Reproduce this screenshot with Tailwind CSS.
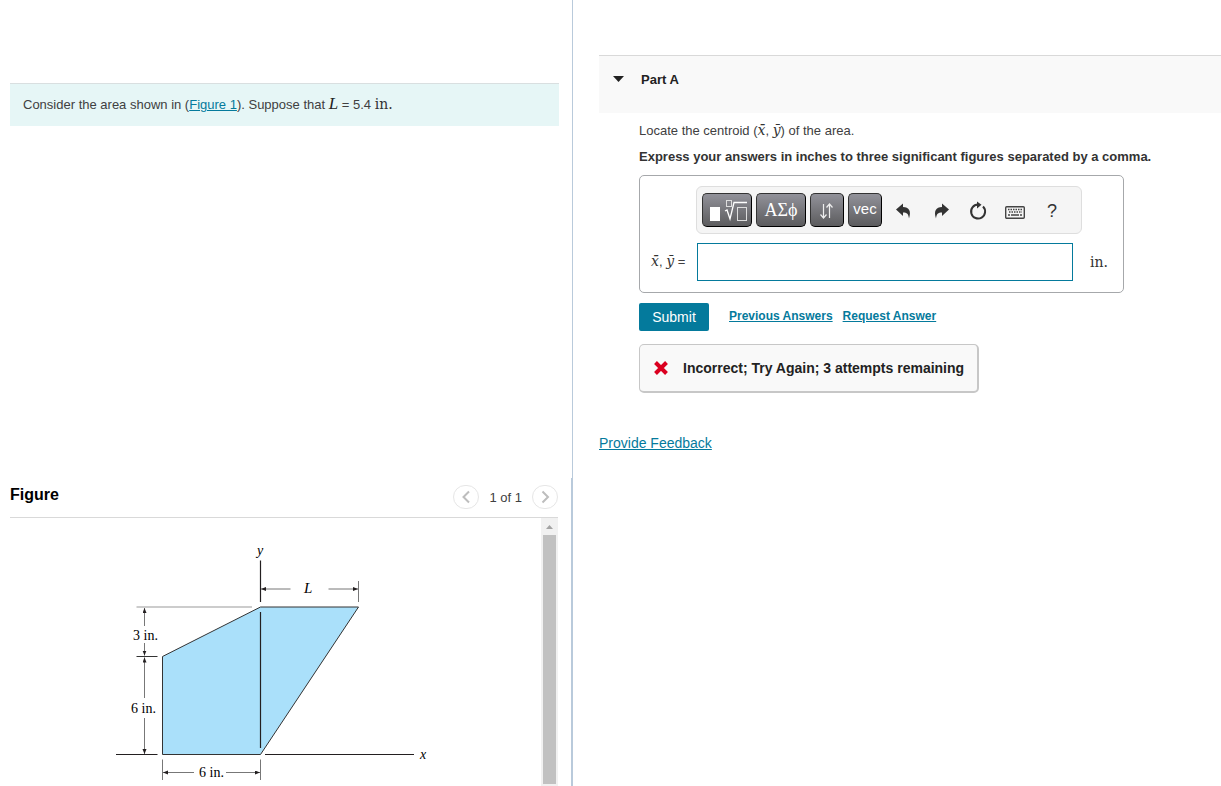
<!DOCTYPE html>
<html lang="en">
<head>
  <meta charset="UTF-8" />
  <title>Centroid of an Area</title>
  <meta name="viewport" content="width=device-width, initial-scale=1.0" />
  <script src="https://cdn.jsdelivr.net/npm/@tailwindcss/browser@4"></script>
</head>
<body class="bg-white text-[#404041] font-['Liberation_Sans',Arial,sans-serif] text-[13px] leading-5">
  <div class="grid grid-cols-[573fr_648fr] h-screen overflow-hidden">

    <!-- problem statement and figure -->
    <section class="flex flex-col min-h-0">
      <div class="flex-1 border-r border-[#b9cadb] pt-[83px] pl-2.5 pr-[13px]">
        <p class="bg-[#e6f6f6] border-t border-[#d9dfe0] px-[13px] py-[11px]">
          Consider the area shown in (<a href="#figure" class="text-[#047a9c] underline">Figure 1</a>). Suppose that
          <i class="font-['Liberation_Serif',serif] text-[17px] leading-4 text-[#222]">L</i> = 5.4 <span class="font-['DejaVu_Serif',serif] text-sm leading-4 text-[#333]">in.</span>
        </p>
      </div>

      <div id="figure" class="h-[308px] shrink-0 flex flex-col border-r-2 border-[#b9cadb] pl-2.5 pr-[13px]">
        <header class="h-10 flex items-start justify-between border-b border-[#d9d9d9]">
          <h2 class="text-base font-bold text-black leading-8 pt-px">Figure</h2>
          <div class="flex items-center gap-2.5 pt-[7px]">
            <button aria-label="Previous figure" class="w-[26px] h-6 rounded-full border border-[#e6e6e6] flex items-center justify-center">
              <svg width="10" height="14" viewBox="0 0 10 14" fill="none" stroke="#bdbdbd" stroke-width="2"><path d="M8 1.500 L2.500 7 L8 12.500" /></svg>
            </button>
            <span class="text-[13px] pt-0.5">1 of 1</span>
            <button aria-label="Next figure" class="w-[26px] h-6 rounded-full border border-[#e6e6e6] flex items-center justify-center">
              <svg width="10" height="14" viewBox="0 0 10 14" fill="none" stroke="#bdbdbd" stroke-width="2"><path d="M2.500 1.500 L8 7 L2.500 12.500" /></svg>
            </button>
          </div>
        </header>

        <div class="flex flex-1 min-h-0">
          <div class="flex-1 min-w-0 overflow-hidden">
            <svg width="531" height="268" viewBox="10 518 531 268" role="img" aria-label="Shaded area in the x-y plane" class="max-w-none">
              <defs>
                <marker id="arrow" markerUnits="userSpaceOnUse" markerWidth="6" markerHeight="5" refX="5" refY="2" orient="auto-start-reverse">
                  <path d="M0 0 L5 2 L0 4 Z" fill="#231f20" />
                </marker>
              </defs>
              <path d="M162.500 656.500 L260.500 607 H358.500 L260.500 754.500 H162.500 Z" fill="#aae0fa" stroke="#333" stroke-width="1" />
              <!-- axes -->
              <g stroke="#231f20" stroke-width="1.200">
                <path d="M260.500 560.500 V602 M260.500 612 V748" />
                <path d="M116 754.500 H157.500 M265 754.500 H414" />
              </g>
              <!-- extension lines -->
              <g stroke="#777" stroke-width="1">
                <path d="M136.500 607 H252" stroke="#999" />
                <path d="M136.500 656.500 H157.500" stroke="#333" />
                <path d="M358.500 581 V602" />
                <path d="M162.500 759.500 V780 M260.500 759.500 V780" />
              </g>
              <!-- dimension lines -->
              <g stroke="#777" stroke-width="1">
                <path d="M144.500 626 V608" marker-end="url(#arrow)" />
                <path d="M144.500 643 V655.500" marker-end="url(#arrow)" />
                <path d="M144.500 698 V657.500" marker-end="url(#arrow)" />
                <path d="M144.500 718 V754" marker-end="url(#arrow)" />
                <path d="M290.500 589 H261" marker-end="url(#arrow)" />
                <path d="M328.500 589 H358" marker-end="url(#arrow)" />
                <path d="M194 772.500 H163" marker-end="url(#arrow)" />
                <path d="M226 772.500 H260" marker-end="url(#arrow)" />
              </g>
              <g class="font-['Liberation_Serif',serif] text-sm" fill="#000">
                <text x="133" y="640">3 in.</text>
                <text x="131" y="713">6 in.</text>
                <text x="199" y="777">6 in.</text>
                <text x="304" y="593" font-style="italic" class="text-[15px]">L</text>
                <text x="257" y="555" font-style="italic">y</text>
                <text x="420" y="759" font-style="italic">x</text>
              </g>
            </svg>
          </div>
          <!-- scrollbar -->
          <div class="w-[17px] bg-[#f1f1f1] flex flex-col items-center pb-0.5">
            <svg class="h-[17px] w-[17px] shrink-0" viewBox="0 0 17 17"><path d="M5 11 L8.500 7 L12 11 Z" fill="#a3a3a3" /></svg>
            <div class="w-[13px] flex-1 bg-[#c1c1c1]"></div>
          </div>
        </div>
      </div>
    </section>

    <!-- answer side -->
    <main class="pt-[55px] pl-[26px]">
      <header class="h-[58px] bg-[#f9f9f9] border-t border-[#d9d9d9] flex items-start gap-[17px] pl-3.5 pt-3.5">
        <svg class="mt-[5px]" width="11" height="8" viewBox="0 0 11 8"><path d="M0 1 H11 L5.500 7 Z" fill="#222" /></svg>
        <h1 class="font-bold text-[#222]">Part A</h1>
      </header>

      <div class="pl-10 pt-2">
        <p>Locate the centroid (<i class="font-['DejaVu_Serif',serif] text-sm leading-4 text-[#333]">x̄</i>, <i class="font-['DejaVu_Serif',serif] text-sm leading-4 text-[#333]">ȳ</i>) of the area.</p>
        <p class="mt-1.5 font-bold text-[#333]">Express your answers in inches to three significant figures separated by a comma.</p>

        <form>
          <div class="mt-2 w-[485px] h-[118px] rounded-[5px] border border-[#a6a8ab] pt-2.5">
            <div class="ml-14 w-[386px] h-12 rounded-md border border-[#dedede] bg-[#f5f5f5] flex items-center pl-[5px] text-white">
              <button type="button" aria-label="Templates" class="w-[50px] h-[34px] mr-1 rounded-[5px] border border-[#333] border-r-black border-b-black bg-linear-to-b from-[#92929a] to-[#5c5c5e]">
                <svg width="48" height="32" viewBox="0 0 48 32" fill="none">
                  <rect x="7" y="13" width="10" height="14" fill="#fff" />
                  <rect x="23.500" y="6.500" width="5" height="6" stroke="#ddd" />
                  <path d="M22 17 L24 16 L27 25 L31 8.500 H44" stroke="#fff" stroke-width="1.300" />
                  <rect x="34.500" y="13.500" width="9" height="13" stroke="#ddd" />
                </svg>
              </button>
              <button type="button" class="w-[50px] h-[34px] mr-1 rounded-[5px] border border-[#333] border-r-black border-b-black bg-linear-to-b from-[#92929a] to-[#5c5c5e] font-['Liberation_Serif',serif] text-lg leading-8">ΑΣϕ</button>
              <button type="button" aria-label="Arrows" class="w-[34px] h-[34px] mr-1 rounded-[5px] border border-[#333] border-r-black border-b-black bg-linear-to-b from-[#92929a] to-[#5c5c5e]">
                <svg width="32" height="32" viewBox="0 0 32 32" fill="none" stroke="#eee" stroke-width="1.200">
                  <path d="M12.500 10 V24 M9.500 20.500 L12.500 24 L15.500 20.500 M18.500 24 V10 M15.500 13.500 L18.500 10 L21.500 13.500" />
                </svg>
              </button>
              <button type="button" class="w-[34px] h-[34px] pb-0.5 rounded-[5px] border border-[#333] border-r-black border-b-black bg-linear-to-b from-[#92929a] to-[#5c5c5e] text-[15px]">vec</button>
              <div class="flex items-center gap-4 ml-2.5 pt-0.5 text-[#333]">
                <button type="button" aria-label="Undo">
                  <svg width="22" height="22" viewBox="0 0 22 22"><path d="M4 9.500 L11 3.500 V7 C17 7 19.500 11 17 18.500 C16.500 14 15 12.500 11 12.500 V16 Z" fill="#333" /></svg>
                </button>
                <button type="button" aria-label="Redo">
                  <svg width="22" height="22" viewBox="0 0 22 22"><path d="M19 9.500 L12 3.500 V7 C6 7 3.500 11 6 18.500 C6.500 14 8 12.500 12 12.500 V16 Z" fill="#333" /></svg>
                </button>
                <button type="button" aria-label="Reset">
                  <svg width="20" height="22" viewBox="0 0 20 22" fill="none"><path d="M10 4.500 A7 7 0 1 0 15 6.500" stroke="#333" stroke-width="2" /><path d="M9 1.500 L13.500 4.800 L9 8.500 Z" fill="#333" /></svg>
                </button>
                <button type="button" aria-label="Keyboard shortcuts">
                  <svg width="22" height="22" viewBox="0 0 22 22" fill="none" stroke="#444"><rect x="1.700" y="6.700" width="18.600" height="11.600" rx="1" stroke-width="1.400" /><path d="M4 9.500 H18 M5 12 H18" stroke-width="1.500" stroke-dasharray="1.500 1" /><path d="M4 15 H6 M7 15 H15 M16 15 H18" stroke-width="1.500" /></svg>
                </button>
                <button type="button" aria-label="Help" class="w-5 text-lg leading-5">?</button>
              </div>
            </div>
            <div class="mt-[9px] flex items-center pl-[11px]">
              <label for="answer" class="w-[46px] whitespace-nowrap"><i class="font-['DejaVu_Serif',serif] text-sm leading-4 text-[#333]">x̄</i>, <i class="font-['DejaVu_Serif',serif] text-sm leading-4 text-[#333]">ȳ</i> =</label>
              <input id="answer" type="text" class="w-[376px] h-[38px] border border-[#047a9c] px-2 outline-none" />
              <span class="ml-[17px] font-['DejaVu_Serif',serif] text-sm leading-5 text-[#333]">in.</span>
            </div>
          </div>

          <div class="mt-2.5 flex items-start">
            <button type="submit" class="w-[70px] h-7 rounded-xs bg-[#047a9c] text-white text-sm">Submit</button>
            <a href="#previous" class="ml-5 mt-[3px] text-xs leading-5 font-bold text-[#047a9c] underline">Previous Answers</a>
            <a href="#request" class="ml-2.5 mt-[3px] text-xs leading-5 font-bold text-[#047a9c] underline">Request Answer</a>
          </div>
        </form>

        <div class="mt-[13px] w-[340px] h-[49px] rounded-[5px] border border-[#c7c7c7] border-r-2 border-b-2 bg-[#f9f9f9] flex items-center pl-3.5 gap-[15px]">
          <svg width="14" height="14" viewBox="0 0 14 14" stroke="#db0020" stroke-width="4"><path d="M1.500 1.500 L12.500 12.500 M12.500 1.500 L1.500 12.500" /></svg>
          <p class="text-sm font-bold text-[#222]">Incorrect; Try Again; 3 attempts remaining</p>
        </div>
      </div>

      <a href="#feedback" class="inline-block mt-10 text-sm text-[#047a9c] underline">Provide Feedback</a>
    </main>
  </div>
</body>
</html>
